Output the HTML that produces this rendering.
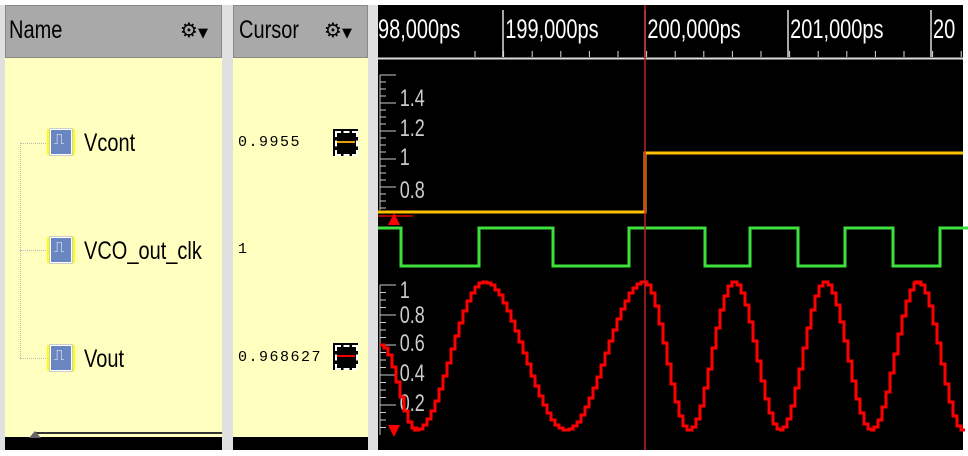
<!DOCTYPE html>
<html><head><meta charset="utf-8"><style>
body{margin:0;width:968px;height:456px;background:#fff;position:relative;overflow:hidden;font-family:"Liberation Sans",sans-serif}
.a{position:absolute}
.hd{background:#a9a9a9;border:1px solid #888;box-sizing:border-box}
.ye{background:#ffffc0}
.t{font-size:25px;color:#000;transform:scaleX(.8);transform-origin:left;white-space:nowrap}
.ic{width:20px;height:24px;background:#6a86c0;border:1px solid #fff;outline:1px solid #ccc;box-shadow:-3px 0 0 #ff0 ,3px 0 0 #ff0}
.mono{font-family:"Liberation Mono",monospace;font-size:15px;letter-spacing:1.5px}
.g{font-family:"DejaVu Sans",sans-serif;font-size:20px;font-weight:bold}
</style></head><body>
<div class="a" style="left:0;top:0;width:968px;height:5px;background:#fff"></div>
<div class="a" style="left:0;top:5px;width:378px;height:445px;background:#e0e0e0"></div>
<div class="a hd" style="left:5px;top:5px;width:217px;height:53px"></div>
<div class="a t" style="left:9px;top:16px">Name</div>
<div class="a g" style="left:180px;top:18px">⚙<span style="font-size:13px">▼</span></div>
<div class="a hd" style="left:233px;top:5px;width:135px;height:53px"></div>
<div class="a t" style="left:239px;top:16px">Cursor</div>
<div class="a g" style="left:324px;top:18px">⚙<span style="font-size:13px">▼</span></div>
<div class="a ye" style="left:5px;top:58px;width:217px;height:379px"></div>
<div class="a ye" style="left:233px;top:58px;width:135px;height:379px"></div>
<div class="a" style="left:5px;top:437px;width:217px;height:13px;background:#000"></div>
<div class="a" style="left:233px;top:437px;width:135px;height:13px;background:#000"></div>
<div class="a" style="left:35px;top:432px;width:187px;height:2px;background:#333"></div>
<div class="a" style="left:29px;top:425px;width:0;height:0;border:6px solid transparent;border-bottom:7px solid #666"></div>
<div class="a" style="left:20px;top:143px;width:0;height:215px;border-left:1px dotted #bbb"></div>
<div class="a" style="left:20px;top:143px;width:28px;border-top:1px dotted #bbb"></div>
<div class="a" style="left:20px;top:250px;width:28px;border-top:1px dotted #bbb"></div>
<div class="a" style="left:20px;top:358px;width:28px;border-top:1px dotted #bbb"></div>
<div class="a ic" style="left:50px;top:129px"></div><div class="a" style="left:54px;top:131px;color:#fff;font-size:15px">⎍</div>
<div class="a ic" style="left:50px;top:237px"></div><div class="a" style="left:54px;top:239px;color:#fff;font-size:15px">⎍</div>
<div class="a ic" style="left:50px;top:345px"></div><div class="a" style="left:54px;top:347px;color:#fff;font-size:15px">⎍</div>
<div class="a t" style="left:84px;top:129px">Vcont</div>
<div class="a t" style="left:84px;top:237px">VCO_out_clk</div>
<div class="a t" style="left:84px;top:345px">Vout</div>
<div class="a mono" style="left:238px;top:134px">0.9955</div>
<div class="a mono" style="left:238px;top:241px">1</div>
<div class="a mono" style="left:238px;top:349px">0.968627</div>
<div class="a" style="left:333px;top:129px;width:25px;height:27px;background:#000;border-left:0"><div class="a" style="left:3px;top:12px;width:19px;height:2px;background:#e8a000"></div><div class="a" style="left:2px;top:2px;width:19px;height:21px;border:2px dashed #fff;border-top-width:2px"></div></div>
<div class="a" style="left:333px;top:343px;width:25px;height:27px;background:#000"><div class="a" style="left:3px;top:12px;width:19px;height:2px;background:#e00"></div><div class="a" style="left:2px;top:2px;width:19px;height:21px;border:2px dashed #fff"></div></div>
<svg class="a" style="left:378px;top:5px" width="590" height="445">
<rect width="590" height="445" fill="#000"/>
<rect x="585" width="5" height="445" fill="#fff"/>
<line x1="0" y1="53.5" x2="585" y2="53.5" stroke="#ddd" stroke-width="2"/>
<g stroke="#ddd" stroke-width="1.5">
<line x1="125" y1="5" x2="125" y2="52"/><line x1="267" y1="5" x2="267" y2="52"/><line x1="410" y1="5" x2="410" y2="52"/><line x1="553" y1="5" x2="553" y2="52"/>
</g>
<g id="tk" stroke="#ddd"></g>
<g fill="#fff" font-family="Liberation Sans" font-size="27" transform="scale(.74,1)">
<text x="0" y="33">98,000ps</text><text x="172" y="33">199,000ps</text><text x="364" y="33">200,000ps</text><text x="557" y="33">201,000ps</text><text x="750" y="33">20</text>
</g>
<g fill="#ccc" font-family="Liberation Sans" font-size="24" transform="scale(.75,1)">
<text x="29" y="101">1.4</text><text x="29" y="131">1.2</text><text x="29" y="160">1</text><text x="29" y="193">0.8</text>
<text x="29" y="293">1</text><text x="29" y="318">0.8</text><text x="29" y="346">0.6</text><text x="29" y="376">0.4</text><text x="29" y="406">0.2</text>
</g>
<g id="ax" stroke="#ccc"></g>
<polyline points="0,207 267,207 267,148 585,148" fill="none" stroke="#ffc000" stroke-width="3"/>
<polyline id="gr" fill="none" stroke="#3ee03e" stroke-width="3"/>
<polyline id="rd" fill="none" stroke="#f00" stroke-width="3"/>
<line x1="267" y1="0" x2="267" y2="445" stroke="#c02020" stroke-width="1.5"/>
<line x1="0" y1="211" x2="35" y2="211" stroke="#a00" stroke-width="2"/>
<polygon points="10,220 16,208 22,220" fill="#f00"/>
<polygon points="10,420 16,432 22,420" fill="#f00"/>
</svg>
<script>
var s='';for(var x=97;x<585;x+=28.6)s+='<line x1="'+x+'" y1="46" x2="'+x+'" y2="52"/>';
document.getElementById('tk').innerHTML=s;
var a='';for(var y=70;y<205;y+=7)a+='<line x1="2" y1="'+y+'" x2="'+((y-70)%28<1?18:8)+'" y2="'+y+'"/>';
for(var y=280;y<430;y+=7.5)a+='<line x1="2" y1="'+y+'" x2="'+((y-280)%30<1?18:8)+'" y2="'+y+'"/>';
a+='<line x1="2" y1="70" x2="2" y2="205"/><line x1="2" y1="280" x2="2" y2="430"/>';
document.getElementById('ax').innerHTML=a;
var e=[479,553,629,705,750,798,845,893,940],hi=223,lo=261,st=hi,p='0,'+hi+' 23,'+hi+' 23,'+lo;st=lo;
for(var i=0;i<e.length;i++){var x=e[i]-378;p+=' '+x+','+st;st=(st==hi?lo:hi);p+=' '+x+','+st;}
p+=' 590,'+st;document.getElementById('gr').setAttribute('points',p);
var ex=[[380,340],[415,425],[483,277],[565,425],[643,277],[688,425],[733,277],[779,425],[824,277],[870,425],[917,277],[962,425]];
var q='';for(var i=0;i<ex.length-1;i++){var a0=ex[i],a1=ex[i+1];for(var x=a0[0];x<a1[0];x+=4){var t=(x-a0[0])/(a1[0]-a0[0]);var y=a0[1]+(a1[1]-a0[1])*(1-Math.cos(Math.PI*t))/2;q+=' '+(x-378)+','+y.toFixed(0)+' '+(x-374)+','+y.toFixed(0);}}
q+=' 584,425';document.getElementById('rd').setAttribute('points',q);
</script>
</body></html>
